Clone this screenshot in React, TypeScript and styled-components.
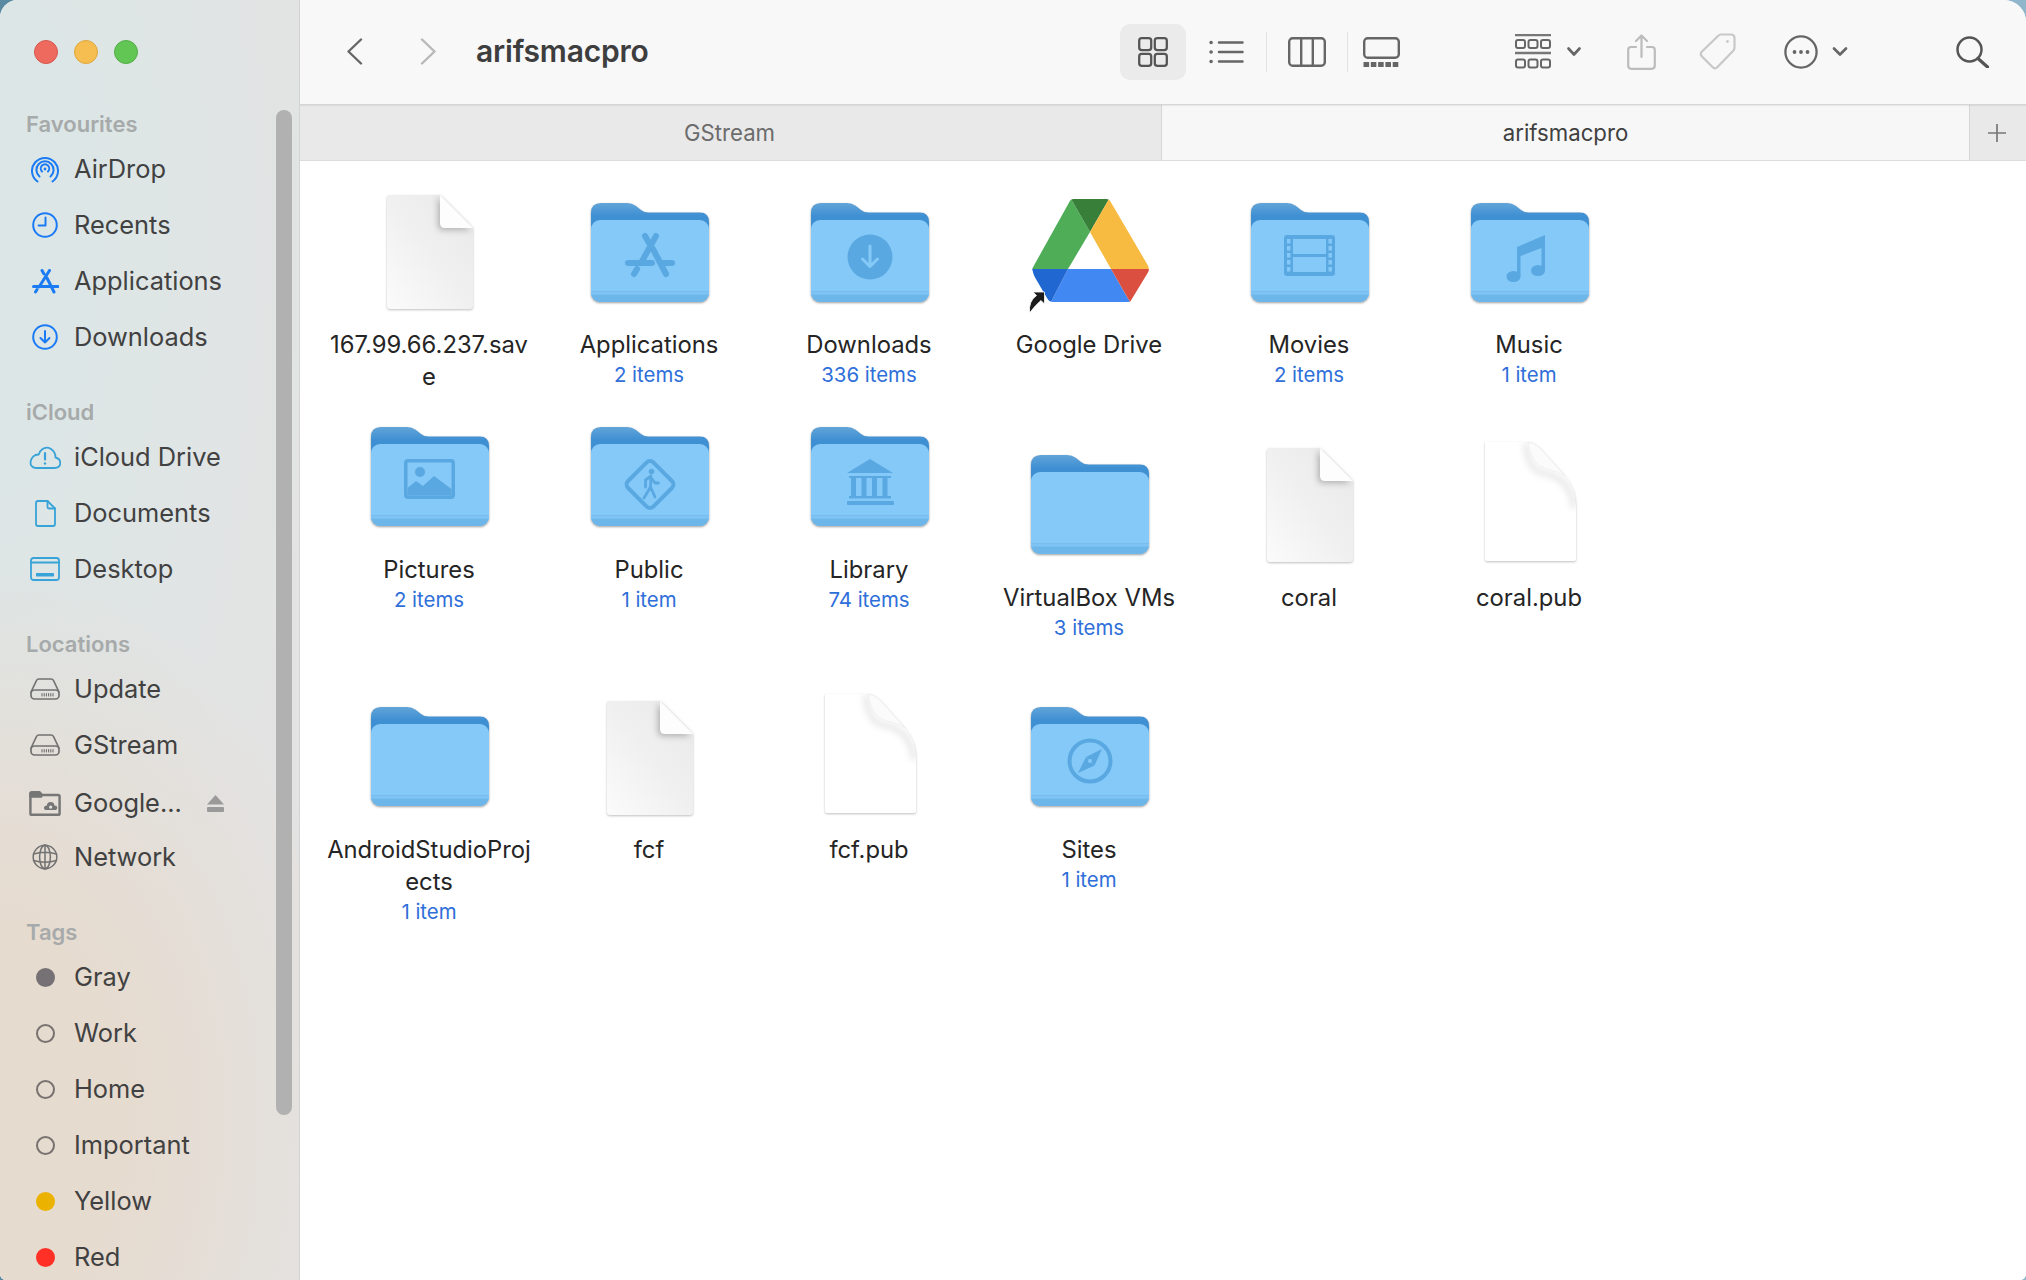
import React, { useId } from "react";
import styled, { createGlobalStyle } from "styled-components";

const Global = createGlobalStyle`
  html, body { margin: 0; padding: 0; background: linear-gradient(90deg, #5a8aa2 0, #8fb6ca 100%); }
  body { font-family: Inter, "Liberation Sans", sans-serif; }
  #root { width: 2026px; height: 1280px; overflow: hidden; }
`;

const Win = styled.div`
  width: 2026px; height: 1280px; display: flex; overflow: hidden;
  border-radius: 18px 22px 6px 6px; background: #fff; position: relative;
`;
const Sidebar = styled.aside`
  width: 300px; height: 1280px; flex: none; box-sizing: border-box; position: relative; overflow: hidden;
  border-right: 1px solid #d4d4d4;
  background:
    radial-gradient(ellipse 360px 560px at 0 1120px, #e6dbcf 0, #e6dbcf 35%, rgba(230,219,207,0) 100%),
    radial-gradient(ellipse 330px 820px at 0 240px, #dde6e6 0, #dde6e6 30%, rgba(221,230,230,0) 100%),
    #e3e3e3;
`;
const Lights = styled.div`
  height: 107px; box-sizing: border-box; padding: 40px 0 0 34px; display: flex; gap: 16px;
`;
const Light = styled.span<{ $c: string; $b: string }>`
  width: 24px; height: 24px; border-radius: 50%; box-sizing: border-box;
  background: ${p => p.$c}; border: 1px solid ${p => p.$b};
`;
const Section = styled.section`
  & + & { margin-top: 30px; }
`;
const Heading = styled.h3`
  margin: 0; height: 34px; line-height: 34px; padding-left: 26px;
  font-size: 22px; font-weight: 600; color: #a6aaaa;
`;
const Row = styled.div<{ $nudge?: number }>`
  height: 56px; box-sizing: border-box; padding: ${p => p.$nudge || 0}px 0 0 29px;
  display: flex; align-items: center; font-size: 25.4px; color: #414141; position: relative;
`;
const RowLabel = styled.span`
  margin-top: -2px;
`;
const RowIcon = styled.span`
  width: 32px; flex: none; margin-right: 13px; display: flex; justify-content: center; align-items: center;
`;
const Eject = styled.svg`
  position: absolute; left: 207px; top: 22px;
`;
const Dot = styled.span<{ $c?: string }>`
  width: 19px; height: 19px; border-radius: 50%; box-sizing: border-box;
  background: ${p => p.$c || "transparent"}; border: 2px solid ${p => p.$c || "#777270"};
`;
const Thumb = styled.div`
  position: absolute; left: 276px; top: 110px; width: 16px; height: 1005px; border-radius: 8px; background: #b1b1b1;
`;

const Main = styled.main`
  flex: 1; min-width: 0; display: flex; flex-direction: column;
`;
const Toolbar = styled.header`
  height: 105px; flex: none; box-sizing: border-box; display: flex; align-items: center; padding: 0 37px 1px 46px;
  background: #f8f8f8; border-bottom: 1px solid #d6d6d6; box-shadow: 0 1px 1px rgba(0,0,0,.06); position: relative;
`;
const Title = styled.div`
  font-size: 30px; font-weight: 600; color: #3e3e3e; margin: 0 auto 2px 39px; letter-spacing: -0.2px;
`;
const Tool = styled.svg<{ $ml?: number }>`
  flex: none; margin-left: ${p => p.$ml || 0}px; display: block;
`;
const Selected = styled.div`
  width: 66px; height: 56px; border-radius: 10px; background: #ebebeb; display: flex; align-items: center; justify-content: center; flex: none;
`;
const Tabs = styled.div`
  height: 56px; flex: none; display: flex; box-sizing: border-box; border-bottom: 1px solid #dcdcdc; background: #e9e9e9;
`;
const Tab = styled.div<{ $active?: boolean }>`
  flex: none; width: ${p => (p.$active ? 809 : 861)}px; box-sizing: border-box; display: flex; align-items: center; justify-content: center;
  padding-right: ${p => (p.$active ? 0 : 2)}px; font-size: 22.2px; color: ${p => (p.$active ? "#404040" : "#6c6c6c")}; background: ${p => (p.$active ? "#f7f7f7" : "#e9e9e9")};
  ${p => p.$active ? "border-left: 1px solid #d6d6d6; border-right: 1px solid #d6d6d6;" : ""}
`;
const AddTab = styled.div`
  flex: 1; display: flex; align-items: center; justify-content: center; padding-right: 2px;
`;
const Files = styled.div`
  flex: 1; padding: 34px 0 0 20px; display: grid; grid-template-columns: repeat(6, 220px); grid-template-rows: 225px 280px auto; background: #fff;
`;
const Item = styled.div<{ $drop?: number }>`
  display: flex; flex-direction: column; align-items: center; padding-top: ${p => p.$drop || 0}px;
`;
const Slot = styled.div<{ $gap: number }>`
  height: 134px; flex: none; box-sizing: border-box; padding-bottom: ${p => p.$gap}px; display: flex; align-items: flex-end; justify-content: center;
`;
const Name = styled.div`
  font-size: 23.8px; line-height: 32px; color: #252525; text-align: center; white-space: pre-line; margin-right: 2px;
`;
const Sub = styled.div`
  font-size: 20.4px; line-height: 27px; color: #2f6fd9; text-align: center; margin-right: 2px;
`;
const IconArt = styled.svg<{ $soft?: boolean }>`
  display: block; overflow: visible;
  filter: ${p => (p.$soft ? "drop-shadow(0 1px 1px rgba(0,0,0,.25))" : "drop-shadow(0 1px 1px rgba(0,0,0,.38))")};
`;
const FoldShade = styled.path`
  filter: drop-shadow(-2px 2px 3px rgba(0,0,0,.26));
`;
const CurlShade = styled.path`
  filter: blur(3px);
`;

const G = "#5aa8e2";
const L = "#84c9f7";

const Folder = ({ children }: { children?: React.ReactNode }) => {
  const id = useId().replace(/[^a-zA-Z0-9]/g, "");
  return (
    <IconArt width="118" height="100" viewBox="0 0 118 100">
      <defs>
        <linearGradient id={id + "b"} x1="0" y1="0" x2="0" y2="1">
          <stop offset="0" stopColor="#62a5d8" />
          <stop offset="0.22" stopColor="#3f8fd3" />
        </linearGradient>
        <clipPath id={id + "c"}><rect x="0" y="17" width="118" height="82" rx="9" /></clipPath>
      </defs>
      <path d="M0 10 Q0 0 10 0 H36 Q41 0 45 3 L50 7 Q53 9.5 58 9.5 H109 Q118 9.5 118 19 V60 H0Z" fill={`url(#${id}b)`} />
      <rect x="0" y="17" width="118" height="82" rx="9" fill="#84c9f7" />
      <g clipPath={`url(#${id}c)`}>
        <rect x="0" y="88" width="118" height="1.5" fill="#78bdee" />
        <rect x="0" y="89.5" width="118" height="2" fill="#7fc4f3" />
        <rect x="0" y="91.5" width="118" height="8" fill="#6db6e9" />
      </g>
      {children}
    </IconArt>
  );
};

const AppsGlyph = () => (
  <g stroke={G} strokeWidth="6" strokeLinecap="round" fill="none">
    <path d="M65 33 L50 60" /><path d="M54 33 L58 40" /><path d="M62 46 L75 71" />
    <path d="M37 60 H61" /><path d="M72 60 H81" /><path d="M43 71 L46 66" />
  </g>
);
const DownGlyph = () => (
  <g>
    <circle cx="59" cy="54" r="22.5" fill={G} />
    <path d="M59 43 V63 M51.5 56 L59 63.5 L66.5 56" stroke={L} strokeWidth="3" strokeLinecap="round" strokeLinejoin="round" fill="none" />
  </g>
);
const FilmGlyph = () => (
  <g>
    <rect x="33" y="32" width="51" height="41" rx="3" fill={G} />
    <rect x="42" y="36" width="33" height="15" fill={L} /><rect x="42" y="54" width="33" height="15" fill={L} />
    {[36, 43, 50, 57, 64].map(y => (
      <g key={y} fill={L}><rect x="36" y={y} width="3.4" height="4.5" /><rect x="77.5" y={y} width="3.4" height="4.5" /></g>
    ))}
  </g>
);
const MusicGlyph = () => (
  <g fill={G}>
    <path d="M46 44 L74 32 V68 H70.5 V45 L49.5 53 V74 H46Z" />
    <ellipse cx="42.5" cy="73.5" rx="7" ry="5.5" /><ellipse cx="67" cy="67.5" rx="7" ry="5.5" />
  </g>
);
const PicGlyph = () => (
  <g>
    <rect x="33" y="32" width="51" height="40" rx="4" fill={G} />
    <rect x="36.5" y="35.5" width="44" height="33" rx="1" fill={L} />
    <circle cx="49" cy="45" r="5" fill={G} />
    <path d="M36.5 61 L45 54 L52 59 L63 49 L80.5 62 V68.5 H36.5Z" fill={G} />
  </g>
);
const PublicGlyph = () => (
  <g>
    <rect x="41" y="39.5" width="36" height="36" rx="5" transform="rotate(45 59 57.5)" fill="none" stroke={G} strokeWidth="4" />
    <circle cx="60.5" cy="44.5" r="2.8" fill={G} />
    <path d="M60 49 L54.5 53 V60 M60 49 L59.5 60 L64 70 M59.5 60 L53 71 M61 52 L64 56 H67.5" stroke={G} strokeWidth="2.8" strokeLinecap="round" strokeLinejoin="round" fill="none" />
  </g>
);
const LibraryGlyph = () => (
  <g fill={G}>
    <path d="M59 32 L82 46 H36Z" />
    {[40, 50.5, 61, 71.5].map(x => <rect key={x} x={x} y="50" width="5" height="20" />)}
    <rect x="38" y="49" width="42" height="2" /><rect x="38" y="69" width="42" height="2.4" />
    <rect x="36" y="74" width="47" height="4" rx="1" />
  </g>
);
const CompassGlyph = () => (
  <g>
    <circle cx="59" cy="54" r="20.5" fill="none" stroke={G} strokeWidth="4" />
    <path d="M71 42 L63.5 58.5 L55 50Z" fill={G} />
    <path d="M47 66 L55 50 L63.5 58.5Z" fill={G} />
    <circle cx="59" cy="54" r="2" fill={L} />
  </g>
);

const Doc = () => {
  const id = useId().replace(/[^a-zA-Z0-9]/g, "");
  return (
    <IconArt $soft width="86" height="114" viewBox="0 0 86 114">
      <defs>
        <linearGradient id={id + "g"} x1="1" y1="0" x2="0" y2="1">
          <stop offset="0" stopColor="#e9e9e9" /><stop offset="0.5" stopColor="#f0f0f0" /><stop offset="1" stopColor="#fbfbfb" />
        </linearGradient>
      </defs>
      <path d="M3 0 H53 L86 33 V111 Q86 114 83 114 H3 Q0 114 0 111 V3 Q0 0 3 0Z" fill={`url(#${id}g)`} />
      <FoldShade d="M53 0 V28 Q53 33 58 33 H86Z" fill="#fdfdfd" />
    </IconArt>
  );
};
const PubDoc = () => {
  const id = useId().replace(/[^a-zA-Z0-9]/g, "");
  const page = "M1 0 H40 Q50 0 57 8 L80 34 Q91 46 91 64 V117 Q91 119 89 119 H2 Q0 119 0 117 V1 Q0 0 1 0Z";
  return (
    <IconArt $soft width="91" height="119" viewBox="0 0 91 119">
      <defs><clipPath id={id}><path d={page} /></clipPath></defs>
      <path d={page} fill="#fff" />
      <g clipPath={`url(#${id})`}>
        <CurlShade d="M41 1 Q42 27 58 31 Q72 33 80 42 Q87 50 89 66" stroke="#000" strokeOpacity=".09" strokeWidth="6" fill="none" />
      </g>
      <path d="M43 0 Q48 0 55 6 L80 34 Q72 29 62 27 Q46 23 43 0Z" fill="#fbfbfb" stroke="#e9e9e9" strokeWidth=".6" />
    </IconArt>
  );
};
const Drive = () => {
  const id = useId().replace(/[^a-zA-Z0-9]/g, "");
  return (
    <svg width="117" height="103" viewBox="0 0 117 103" style={{ display: "block", overflow: "visible" }}>
      <defs>
        <clipPath id={id}>
          <path d="M42 0 H74 Q78 0 80 4 L115.5 65 Q118 70 116 75 L103 99 Q101 103 96 103 H21 Q17 103 15 99 L1 75 Q-1 70 1.5 65 L36 4 Q38 0 42 0Z" />
        </clipPath>
      </defs>
      <g clipPath={`url(#${id})`}>
        <path d="M39 0 L58 33 L36 70 H0Z" fill="#4fad57" />
        <path d="M39 0 H77 L58 33Z" fill="#387f39" />
        <path d="M77 0 L118 70 H79 L58 33Z" fill="#f8bb42" />
        <path d="M36 70 H79 L98 103 H19Z" fill="#4188f2" />
        <path d="M79 70 H118 L98 103Z" fill="#db4f40" />
        <path d="M0 70 H36 L19 103 H10Z" fill="#2167d2" />
      </g>
      <path d="M-2.5 114 Q-3.5 102 4.5 96.5 L1 93 L12.5 93 L12.5 105 L9 101.5 Q3.5 106 -2.5 114Z" fill="#1c1c1c" stroke="#fff" strokeWidth=".8" strokeLinejoin="round" />
    </svg>
  );
};

const BLUE = "#1b7bf4";
const CYAN = "#38a3d8";
const GREY = "#727272";
const S = { fill: "none", strokeLinecap: "round" as const, strokeLinejoin: "round" as const };

const sideIcons: Record<string, React.ReactNode> = {
  airdrop: (
    <svg width="28" height="27" viewBox="0 0 28 27" {...S} stroke={BLUE} strokeWidth="2">
      <path d="M6.5 25.5 A13 13 0 1 1 21.5 25.5" /><path d="M8.5 20.5 A8.6 8.6 0 1 1 19.5 20.5" /><path d="M11 15.5 A4.2 4.2 0 1 1 17 15.5" />
      <circle cx="14" cy="13" r="1.4" fill={BLUE} stroke="none" />
    </svg>
  ),
  recents: (
    <svg width="26" height="26" viewBox="0 0 26 26" {...S} stroke={BLUE} strokeWidth="2">
      <circle cx="13" cy="13" r="11.8" /><path d="M13.5 5.5 V13.5 H6.5" />
    </svg>
  ),
  apps: (
    <svg width="27" height="25" viewBox="0 0 27 25" {...S} stroke={BLUE} strokeWidth="3">
      <path d="M17.5 1.5 L7 18" /><path d="M10 1.5 L12 5" /><path d="M15 9 L22 23" /><path d="M1.5 17.5 H26" /><path d="M3.5 23 L5 20.5" />
    </svg>
  ),
  downloads: (
    <svg width="26" height="26" viewBox="0 0 26 26" {...S} stroke={BLUE} strokeWidth="2">
      <circle cx="13" cy="13" r="11.8" /><path d="M13 7 V18.5 M8.5 14 L13 18.5 L17.5 14" />
    </svg>
  ),
  cloud: (
    <svg width="32" height="23" viewBox="0 0 32 23" {...S} stroke={CYAN} strokeWidth="1.8">
      <path d="M7 22 H25.5 C33 22 33 13 26.5 11.5 C26.5 4 19 -1 13 3.5 C11 5 10 7 9.7 8.5 C1 8 -2 22 7 22Z" />
      <path d="M16 7 V13.5" strokeWidth="2.2" /><circle cx="16" cy="17.5" r="1.2" fill={CYAN} stroke="none" />
    </svg>
  ),
  doc: (
    <svg width="21" height="27" viewBox="0 0 21 27" {...S} stroke={CYAN} strokeWidth="1.8">
      <path d="M3 1 H12.5 L20 8.5 V24 Q20 26 18 26 H3 Q1 26 1 24 V3 Q1 1 3 1Z" /><path d="M12.5 1 V7 Q12.5 8.5 14 8.5 H20" />
    </svg>
  ),
  desktop: (
    <svg width="30" height="24" viewBox="0 0 30 24" {...S} stroke={CYAN} strokeWidth="1.8">
      <rect x="1" y="1" width="28" height="22" rx="2.5" /><path d="M1 5.5 H29" />
      <rect x="6" y="16" width="18" height="3.4" rx=".6" fill={CYAN} stroke="none" />
    </svg>
  ),
  drive: (
    <svg width="30" height="22" viewBox="0 0 30 22" {...S} stroke={GREY} strokeWidth="1.7">
      <path d="M1 14 L6.5 2.5 Q7.2 1 9 1 H21 Q22.8 1 23.5 2.5 L29 14" />
      <rect x="1" y="12" width="28" height="9" rx="3.5" />
      <path d="M12 15.5 V18 M14.2 15.5 V18 M16.4 15.5 V18 M18.6 15.5 V18 M20.8 15.5 V18 M23 15.5 V18" strokeWidth="1.1" />
    </svg>
  ),
  gfolder: (
    <svg width="34" height="27" viewBox="0 0 34 27" {...S} stroke="#767676" strokeWidth="2.6">
      <path d="M1.5 3 Q1.5 1.5 3 1.5 H11 L14 4.5 H31 Q32.5 4.5 32.5 6 V24 Q32.5 25.5 31 25.5 H3 Q1.5 25.5 1.5 24Z" />
      <path d="M1.5 3 H10.5 L13 6 H1.5Z" fill="#767676" />
      <path d="M18.5 20.5 Q15.5 20.5 16 17.5 Q16.5 15.5 19 15.5 Q19.5 12 23 12 Q26.5 12 27 15.5 Q30 15.5 30 18 Q30 20.5 27 20.5Z" fill="#767676" stroke="none" />
      <circle cx="23" cy="17.3" r="1.7" fill="#e3e3e3" stroke="none" />
    </svg>
  ),
  globe: (
    <svg width="26" height="26" viewBox="0 0 26 26" {...S} stroke={GREY} strokeWidth="1.5">
      <circle cx="13" cy="13" r="11.8" /><ellipse cx="13" cy="13" rx="5.4" ry="11.8" />
      <path d="M13 1 V25 M1.5 10 Q13 6.5 24.5 10 M1.5 16.5 Q13 20 24.5 16.5" />
    </svg>
  ),
};

const sections = [
  { title: "Favourites", rows: [["airdrop", "AirDrop"], ["recents", "Recents"], ["apps", "Applications"], ["downloads", "Downloads"]] },
  { title: "iCloud", rows: [["cloud", "iCloud Drive"], ["doc", "Documents"], ["desktop", "Desktop"]] },
  { title: "Locations", rows: [["drive", "Update"], ["drive", "GStream"], ["gfolder", "Google..."], ["globe", "Network"]] },
];
const tags: [string, string | undefined][] = [
  ["Gray", "#757174"], ["Work", undefined], ["Home", undefined], ["Important", undefined], ["Yellow", "#ecb200"], ["Red", "#ff3126"],
];

type FileItem = { name: string; sub?: string; art: React.ReactNode; gap: number; drop?: number };
const F = 27; const D = 20; const T = 26;
const files: FileItem[] = [
  { name: "167.99.66.237.sav\ne", art: <Doc />, gap: D },
  { name: "Applications", sub: "2 items", art: <Folder><AppsGlyph /></Folder>, gap: T },
  { name: "Downloads", sub: "336 items", art: <Folder><DownGlyph /></Folder>, gap: T },
  { name: "Google Drive", art: <Drive />, gap: 27 },
  { name: "Movies", sub: "2 items", art: <Folder><FilmGlyph /></Folder>, gap: T },
  { name: "Music", sub: "1 item", art: <Folder><MusicGlyph /></Folder>, gap: T },
  { name: "Pictures", sub: "2 items", art: <Folder><PicGlyph /></Folder>, gap: F },
  { name: "Public", sub: "1 item", art: <Folder><PublicGlyph /></Folder>, gap: F },
  { name: "Library", sub: "74 items", art: <Folder><LibraryGlyph /></Folder>, gap: F },
  { name: "VirtualBox VMs", sub: "3 items", art: <Folder />, gap: F, drop: 28 },
  { name: "coral", art: <Doc />, gap: D, drop: 28 },
  { name: "coral.pub", art: <PubDoc />, gap: 21, drop: 28 },
  { name: "AndroidStudioProj\nects", sub: "1 item", art: <Folder />, gap: F },
  { name: "fcf", art: <Doc />, gap: 19 },
  { name: "fcf.pub", art: <PubDoc />, gap: 21 },
  { name: "Sites", sub: "1 item", art: <Folder><CompassGlyph /></Folder>, gap: F },
];

const TS = { fill: "none", strokeLinecap: "round" as const, strokeLinejoin: "round" as const };

export default function App() {
  return (
    <>
      <Global />
      <Win>
        <Sidebar>
          <Lights>
            <Light $c="#ee6a5f" $b="#d5584e" />
            <Light $c="#f6bd50" $b="#dea63c" />
            <Light $c="#62c655" $b="#52ae47" />
          </Lights>
          {sections.map(s => (
            <Section key={s.title}>
              <Heading>{s.title}</Heading>
              {s.rows.map(([ic, label]) => (
                <Row key={label} $nudge={ic === "gfolder" ? 4 : 0}>
                  <RowIcon>{sideIcons[ic]}</RowIcon>
                  <RowLabel>{label}</RowLabel>
                  {ic === "gfolder" && (
                    <Eject width="17" height="17" viewBox="0 0 17 17" fill="#9a9a9a">
                      <path d="M8.5 0 L17 9.5 H0Z" /><rect x="0" y="12" width="17" height="5" rx="1" />
                    </Eject>
                  )}
                </Row>
              ))}
            </Section>
          ))}
          <Section>
            <Heading>Tags</Heading>
            {tags.map(([label, c]) => (
              <Row key={label}>
                <RowIcon><Dot $c={c} /></RowIcon>
                <RowLabel>{label}</RowLabel>
              </Row>
            ))}
          </Section>
          <Thumb />
        </Sidebar>
        <Main>
          <Toolbar>
            <Tool width="17" height="27" viewBox="0 0 17 27" {...TS} stroke="#666" strokeWidth="2.4"><path d="M15 1.5 L2.5 13.5 L15 25.5" /></Tool>
            <Tool $ml={57} width="17" height="27" viewBox="0 0 17 27" {...TS} stroke="#b8b8b8" strokeWidth="2.4"><path d="M2 1.5 L14.5 13.5 L2 25.5" /></Tool>
            <Title>arifsmacpro</Title>
            <Selected>
              <Tool width="30" height="30" viewBox="0 0 30 30" {...TS} stroke="#555" strokeWidth="2.3">
                <rect x="1.2" y="1.2" width="12" height="12" rx="2.6" /><rect x="16.8" y="1.2" width="12" height="12" rx="2.6" />
                <rect x="1.2" y="16.8" width="12" height="12" rx="2.6" /><rect x="16.8" y="16.8" width="12" height="12" rx="2.6" />
              </Tool>
            </Selected>
            <Tool $ml={23} width="35" height="24" viewBox="0 0 35 24" {...TS} stroke="#666" strokeWidth="2.5">
              <path d="M2 2.5 H2.2 M2 12 H2.2 M2 21.5 H2.2" strokeWidth="3.4" /><path d="M10 2.5 H33.5 M10 12 H33.5 M10 21.5 H33.5" />
            </Tool>
            <Tool $ml={22} width="1" height="40" viewBox="0 0 1 40"><rect width="1" height="40" fill="#e2e2e2" /></Tool>
            <Tool $ml={21} width="38" height="30" viewBox="0 0 38 30" {...TS} stroke="#666" strokeWidth="2.4">
              <rect x="1.2" y="1.2" width="35.6" height="27.6" rx="3.5" /><path d="M13.2 1.2 V28.8 M24.8 1.2 V28.8" />
            </Tool>
            <Tool $ml={21} width="1" height="40" viewBox="0 0 1 40"><rect width="1" height="40" fill="#e2e2e2" /></Tool>
            <Tool $ml={15} width="37" height="30" viewBox="0 0 37 30" {...TS} stroke="#666" strokeWidth="2.4">
              <rect x="1.2" y="1.2" width="34.6" height="19.6" rx="3.5" />
              <g fill="#666" stroke="none">
                {[0.5, 7.8, 15.1, 22.4, 29.7].map(x => <rect key={x} x={x} y="25" width="5.6" height="5" rx=".5" />)}
              </g>
            </Tool>
            <Tool $ml={115} width="36" height="35" viewBox="0 0 36 35" {...TS} stroke="#666" strokeWidth="2">
              <path d="M0 1 H36 M0 19 H36" stroke="#777" strokeWidth="2.4" strokeLinecap="butt" />
              <rect x="1" y="6" width="9" height="8" rx="2" /><rect x="13.5" y="6" width="9" height="8" rx="2" /><rect x="26" y="6" width="9" height="8" rx="2" />
              <rect x="1" y="25.5" width="9" height="8" rx="2" /><rect x="13.5" y="25.5" width="9" height="8" rx="2" /><rect x="26" y="25.5" width="9" height="8" rx="2" />
            </Tool>
            <Tool $ml={16} width="14" height="9" viewBox="0 0 14 9" {...TS} stroke="#666" strokeWidth="2.6"><path d="M1.5 1.5 L7 7.5 L12.5 1.5" /></Tool>
            <Tool $ml={46} width="29" height="36" viewBox="0 0 29 36" {...TS} stroke="#bcbcbc" strokeWidth="2.2">
              <path d="M9 13 H4 Q1.2 13 1.2 16 V31.5 Q1.2 34.8 4.5 34.8 H24.5 Q27.8 34.8 27.8 31.5 V16 Q27.8 13 25 13 H20" />
              <path d="M14.5 23 V1.5 M9 7 L14.5 1.5 L20 7" />
            </Tool>
            <Tool $ml={43} width="37" height="37" viewBox="0 0 37 37" {...TS} stroke="#c8c8c8" strokeWidth="2.2">
              <path d="M22 1.5 H32 Q35.5 1.5 35.5 5 V15 Q35.5 16.5 34 18 L18.5 34 Q16 36.5 13.5 34 L3 23.5 Q0.5 21 3 18.5 L19 3 Q20.5 1.5 22 1.5Z" />
              <circle cx="28.5" cy="8.5" r="1.4" fill="#c8c8c8" stroke="none" />
            </Tool>
            <Tool $ml={48} width="34" height="34" viewBox="0 0 34 34" {...TS} stroke="#666" strokeWidth="2.3">
              <circle cx="17" cy="17" r="15.6" />
              <circle cx="10.5" cy="17" r="1.9" fill="#666" stroke="none" /><circle cx="17" cy="17" r="1.9" fill="#666" stroke="none" /><circle cx="23.5" cy="17" r="1.9" fill="#666" stroke="none" />
            </Tool>
            <Tool $ml={14} width="16" height="9" viewBox="0 0 16 9" {...TS} stroke="#666" strokeWidth="2.6"><path d="M2 1.5 L8 7.5 L14 1.5" /></Tool>
            <Tool $ml={108} width="33" height="32" viewBox="0 0 33 32" {...TS} stroke="#555" strokeWidth="2.5">
              <circle cx="13.5" cy="13.5" r="12" /><path d="M22 22.5 L31.5 31" strokeWidth="3.2" />
            </Tool>
          </Toolbar>
          <Tabs>
            <Tab>GStream</Tab>
            <Tab $active>arifsmacpro</Tab>
            <AddTab>
              <svg width="20" height="20" viewBox="0 0 20 20" stroke="#777" strokeWidth="1.7"><path d="M10 1 V19 M1 10 H19" /></svg>
            </AddTab>
          </Tabs>
          <Files>
            {files.map(f => (
              <Item key={f.name} $drop={f.drop}>
                <Slot $gap={f.gap}>{f.art}</Slot>
                <Name>{f.name}</Name>
                {f.sub && <Sub>{f.sub}</Sub>}
              </Item>
            ))}
          </Files>
        </Main>
      </Win>
    </>
  );
}
